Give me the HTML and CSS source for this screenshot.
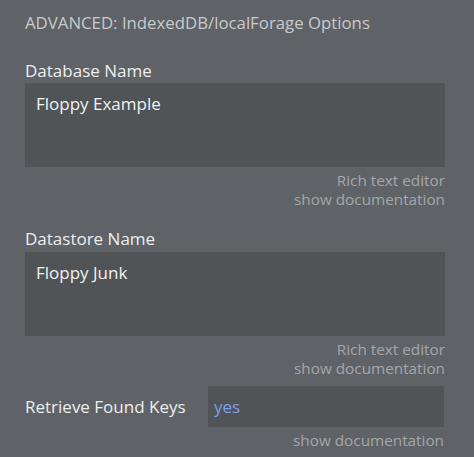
FILE: index.html
```html
<!DOCTYPE html>
<html>
<head>
<meta charset="utf-8">
<link rel="stylesheet" href="styles.css">
</head>
<body>
<div class="panel">
  <div class="title">ADVANCED: IndexedDB/localForage Options</div>

  <div class="field">
    <div class="label label-first">Database Name</div>
    <div class="textbox">Floppy Example</div>
    <div class="hints">
      <div>Rich text editor</div>
      <div>show documentation</div>
    </div>
  </div>

  <div class="field">
    <div class="label label-second">Datastore Name</div>
    <div class="textbox">Floppy Junk</div>
    <div class="hints">
      <div>Rich text editor</div>
      <div>show documentation</div>
    </div>
  </div>

  <div class="field">
    <div class="row">
      <div class="row-label">Retrieve Found Keys</div>
      <div class="select">yes</div>
    </div>
    <div class="hints hints-row">
      <div>show documentation</div>
    </div>
  </div>
</div>
</body>
</html>
```

FILE: styles.css
```css
html, body {
  margin: 0;
  padding: 0;
}

body {
  background: #5f6367;
  font-family: "Open Sans", "Noto Sans", sans-serif;
  font-size: 17px;
  line-height: 20px;
  width: 474px;
  height: 457px;
  overflow: hidden;
}

.panel {
  padding: 13px 29px 0 25px;
}

.title {
  color: #c8cacc;
  font-size: 16.8px;
}

.label {
  color: #eceeef;
}

.label-first {
  margin-top: 28px;
  margin-bottom: 2px;
}

.label-second {
  margin-top: 21px;
  margin-bottom: 3px;
}

.textbox {
  background: #505457;
  color: #f0f1f2;
  height: 84px;
  box-sizing: border-box;
  padding: 11px 11px 0 11px;
}

.hints {
  margin-top: 4px;
  text-align: right;
  color: #a3a6a9;
  font-size: 15.3px;
  line-height: 18.5px;
}

.row {
  display: grid;
  grid-template-columns: 183px 1fr;
  align-items: center;
  margin-top: 9px;
  margin-right: 1px;
}

.row-label {
  color: #eceeef;
}

.select {
  background: #505457;
  color: #809ded;
  height: 41px;
  box-sizing: border-box;
  padding: 0 6px;
  display: flex;
  align-items: center;
}

.hints-row {
  margin-right: 1px;
}
```
